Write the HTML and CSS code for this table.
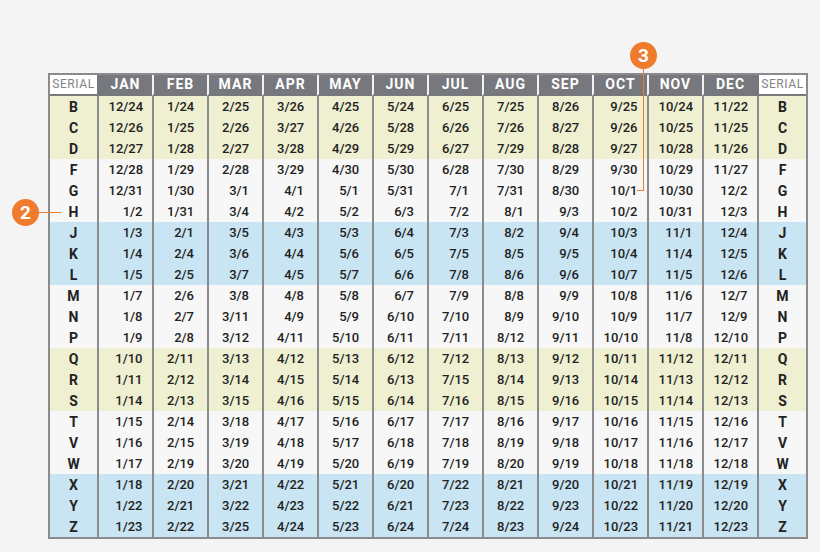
FILE: index.html
```html
<!DOCTYPE html>
<html>
<head>
<meta charset="utf-8">
<link rel="stylesheet" href="styles.css">
</head>
<body>
<div class="page">
  <table class="chart">
    <thead>
      <tr>
        <th class="serial-h">SERIAL</th>
        <th class="first">JAN</th><th>FEB</th><th>MAR</th><th>APR</th><th>MAY</th><th>JUN</th>
        <th>JUL</th><th>AUG</th><th>SEP</th><th>OCT</th><th>NOV</th><th>DEC</th>
        <th class="serial-h last">SERIAL</th>
      </tr>
    </thead>
    <tbody id="rows"></tbody>
  </table>
  <div class="badge badge-2">2</div>
  <div class="lead lead-2"></div>
  <div class="badge badge-3">3</div>
  <div class="lead lead-3v"></div>
  <div class="lead lead-3h"></div>
</div>
<script src="app.js"></script>
</body>
</html>
```

FILE: app.js
```js
const data = [
  ["B","y","12/24 1/24 2/25 3/26 4/25 5/24 6/25 7/25 8/26 9/25 10/24 11/22"],
  ["C","y","12/26 1/25 2/26 3/27 4/26 5/28 6/26 7/26 8/27 9/26 10/25 11/25"],
  ["D","y","12/27 1/28 2/27 3/28 4/29 5/29 6/27 7/29 8/28 9/27 10/28 11/26"],
  ["F","w","12/28 1/29 2/28 3/29 4/30 5/30 6/28 7/30 8/29 9/30 10/29 11/27"],
  ["G","w","12/31 1/30 3/1 4/1 5/1 5/31 7/1 7/31 8/30 10/1 10/30 12/2"],
  ["H","w","1/2 1/31 3/4 4/2 5/2 6/3 7/2 8/1 9/3 10/2 10/31 12/3"],
  ["J","b","1/3 2/1 3/5 4/3 5/3 6/4 7/3 8/2 9/4 10/3 11/1 12/4"],
  ["K","b","1/4 2/4 3/6 4/4 5/6 6/5 7/5 8/5 9/5 10/4 11/4 12/5"],
  ["L","b","1/5 2/5 3/7 4/5 5/7 6/6 7/8 8/6 9/6 10/7 11/5 12/6"],
  ["M","w","1/7 2/6 3/8 4/8 5/8 6/7 7/9 8/8 9/9 10/8 11/6 12/7"],
  ["N","w","1/8 2/7 3/11 4/9 5/9 6/10 7/10 8/9 9/10 10/9 11/7 12/9"],
  ["P","w","1/9 2/8 3/12 4/11 5/10 6/11 7/11 8/12 9/11 10/10 11/8 12/10"],
  ["Q","y","1/10 2/11 3/13 4/12 5/13 6/12 7/12 8/13 9/12 10/11 11/12 12/11"],
  ["R","y","1/11 2/12 3/14 4/15 5/14 6/13 7/15 8/14 9/13 10/14 11/13 12/12"],
  ["S","y","1/14 2/13 3/15 4/16 5/15 6/14 7/16 8/15 9/16 10/15 11/14 12/13"],
  ["T","w","1/15 2/14 3/18 4/17 5/16 6/17 7/17 8/16 9/17 10/16 11/15 12/16"],
  ["V","w","1/16 2/15 3/19 4/18 5/17 6/18 7/18 8/19 9/18 10/17 11/16 12/17"],
  ["W","w","1/17 2/19 3/20 4/19 5/20 6/19 7/19 8/20 9/19 10/18 11/18 12/18"],
  ["X","b","1/18 2/20 3/21 4/22 5/21 6/20 7/22 8/21 9/20 10/21 11/19 12/19"],
  ["Y","b","1/22 2/21 3/22 4/23 5/22 6/21 7/23 8/22 9/23 10/22 11/20 12/20"],
  ["Z","b","1/23 2/22 3/25 4/24 5/23 6/24 7/24 8/23 9/24 10/23 11/21 12/23"]
];
const wide = [true,false,false,false,false,false,false,false,false,true,true,true];
const tbody = document.getElementById("rows");
data.forEach(([letter, band, vals]) => {
  const tr = document.createElement("tr");
  tr.className = "band-" + band;
  let html = '<td class="serial">' + letter + '</td>';
  vals.split(" ").forEach((v, i) => {
    html += '<td' + (i === 0 ? ' class="first"' : '') + '><span class="num ' + (wide[i] ? 'w5' : 'w4') + '">' + v + '</span></td>';
  });
  html += '<td class="serial last">' + letter + '</td>';
  tr.innerHTML = html;
  tbody.appendChild(tr);
});
```

FILE: styles.css
```css
html, body {
  margin: 0;
  padding: 0;
  background: #f4f4f4;
}

.page {
  position: relative;
  width: 820px;
  height: 552px;
  padding: 73px 0 0 48px;
  box-sizing: border-box;
  font-family: Roboto, "Liberation Sans", sans-serif;
}

.chart {
  border-collapse: separate;
  border-spacing: 0;
  table-layout: fixed;
  border: 2px solid #8b8b8d;
  background: #f7f7f7;
}

.chart th,
.chart td {
  padding: 0;
  width: 53px;
  border-left: 2px solid #8b8b8d;
  text-align: center;
  white-space: nowrap;
}

.chart th {
  height: 19px;
  line-height: 19px;
  background: #77787d;
  color: #ffffff;
  font-size: 14px;
  font-weight: 700;
  letter-spacing: 1px;
  border-left-color: #f2f2f2;
  border-bottom: 2px solid #77787d;
}

.chart th.first {
  border-left-color: #77787d;
}

.chart th.serial-h {
  width: 47px;
  background: #ffffff;
  color: #828387;
  font-size: 12px;
  font-weight: 400;
  letter-spacing: 0.6px;
  border-left: 0;
}

.chart th.serial-h.last {
  border-left: 2px solid #77787d;
}

.chart td {
  height: 20px;
  padding-top: 1px;
  line-height: 20px;
  font-size: 13px;
  font-weight: 500;
  color: #222222;
}

.chart td.serial {
  width: 47px;
  border-left: 0;
  font-size: 14px;
  font-weight: 700;
}

.chart td.serial.last {
  border-left: 2px solid #8b8b8d;
}

.num {
  display: inline-block;
  text-align: right;
}

.num.w5 { width: 34px; }
.num.w4 { width: 27px; }

.band-y td { background: #efefd1; }
.band-b td { background: #c9e4f2; }
.band-w td { background: #f7f7f7; }

.badge {
  position: absolute;
  width: 27px;
  height: 27px;
  border-radius: 50%;
  background: #ef7b2d;
  color: #ffffff;
  font-family: Roboto, "Liberation Sans", sans-serif;
  font-weight: 700;
  font-size: 19px;
  line-height: 27px;
  text-align: center;
}

.badge-2 { left: 12px; top: 199px; }
.badge-3 { left: 630px; top: 42px; }

.lead {
  position: absolute;
  background: #ef7b2d;
}

.lead-2 { left: 39px; top: 212px; width: 22px; height: 1px; }
.lead-3v { left: 643px; top: 68px; width: 1px; height: 123px; }
.lead-3h { left: 637px; top: 190px; width: 7px; height: 1px; }
```
